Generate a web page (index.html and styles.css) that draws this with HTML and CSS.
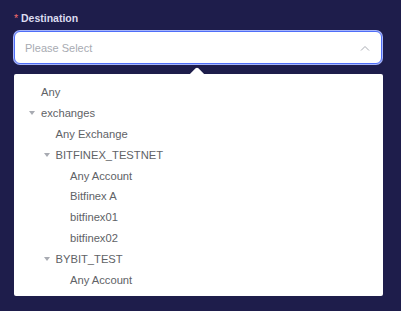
FILE: index.html
```html
<!DOCTYPE html>
<html lang="en">

<head>
    <meta charset="utf-8">
    <meta name="viewport" content="width=device-width, initial-scale=1.0">
    <title>Destination</title>

    <link rel="stylesheet" href="styles.css">

</head>

<body>

    <main class="form">
        <label class="label"><span class="req">*</span> Destination</label>

        <div class="select">
            <span class="placeholder">Please Select</span>
            <svg class="caret" width="10" height="6" viewBox="0 0 10 6">
                <path d="M1 5.5 L5 1.5 L9 5.5" fill="none" stroke="#a8abb2" stroke-width="1"/>
            </svg>
        </div>

        <section class="dropdown">
            <span class="pointer"></span>
            <ul class="tree">
                <li class="row lvl0"><span class="tri none"></span>Any</li>
                <li class="row lvl0"><span class="tri"></span>exchanges</li>
                <li class="row lvl1"><span class="tri none"></span>Any Exchange</li>
                <li class="row lvl1"><span class="tri"></span>BITFINEX_TESTNET</li>
                <li class="row lvl2"><span class="tri none"></span>Any Account</li>
                <li class="row lvl2"><span class="tri none"></span>Bitfinex A</li>
                <li class="row lvl2"><span class="tri none"></span>bitfinex01</li>
                <li class="row lvl2"><span class="tri none"></span>bitfinex02</li>
                <li class="row lvl1"><span class="tri"></span>BYBIT_TEST</li>
                <li class="row lvl2"><span class="tri none"></span>Any Account</li>
            </ul>
        </section>
    </main>

</body>

</html>
```

FILE: styles.css
```css
body {
    margin: 0;
    background-color: #1e1d4b;
    font-family: "Liberation Sans", Arial, sans-serif;
}

.form {
    padding: 11px 18px 0 13px;
}

.label {
    display: block;
    height: 14px;
    line-height: 14px;
    font-size: 10.5px;
    font-weight: bold;
    color: #dcdcf0;
    padding-left: 1px;
}

.req {
    color: #f56c6c;
    font-weight: normal;
}

.select {
    margin-top: 6px;
    height: 33px;
    box-sizing: border-box;
    width: 368px;
    margin-left: 1px;
    border: 1px solid #4f6ef7;
    box-shadow: 0 0 0 1px #a7b5fb;
    border-radius: 6px;
    background-color: #fff;
    display: flex;
    align-items: center;
    justify-content: space-between;
    padding: 0 10px 0 10px;
}

.placeholder {
    font-size: 11px;
    color: #a8abb2;
}

.caret {
    margin-right: 1px;
}

.dropdown {
    position: relative;
    margin-top: 10px;
    width: 369px;
    margin-left: 1px;
    background-color: #fff;
    border-radius: 2px;
    padding: 8px 0 6px;
}

.pointer {
    position: absolute;
    top: -5px;
    left: 178px;
    width: 10px;
    height: 10px;
    background-color: #fff;
    transform: rotate(45deg);
    border-radius: 2px 0 0 0;
}

.tree {
    list-style: none;
    margin: 0;
    padding: 0;
    position: relative;
}

.row {
    height: 20.8px;
    display: flex;
    align-items: center;
    font-size: 11.2px;
    color: #606266;
}

.lvl0 {
    padding-left: 12px;
}

.lvl1 {
    padding-left: 26.5px;
}

.lvl2 {
    padding-left: 41px;
}

.tri {
    width: 0;
    height: 0;
    border-left: 3px solid transparent;
    border-right: 3px solid transparent;
    border-top: 4px solid #a8abb2;
    margin: 0 6px 0 3px;
}

.tri.none {
    border-top-color: transparent;
}
```
